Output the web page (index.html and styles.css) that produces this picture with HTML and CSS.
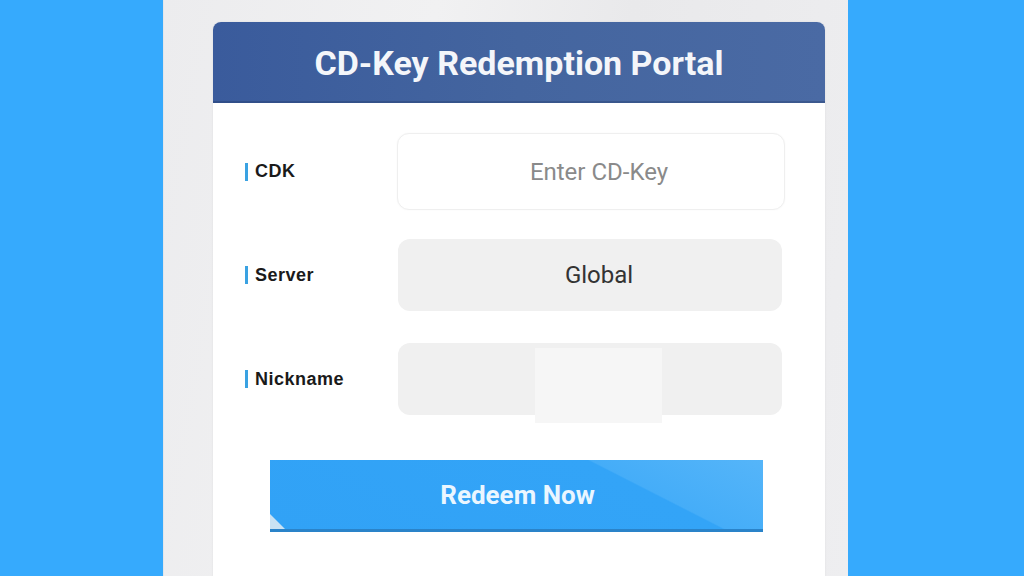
FILE: index.html
```html
<!DOCTYPE html>
<html>
<head>
<meta charset="utf-8">
<link rel="stylesheet" href="styles.css">
</head>
<body>
<div class="stage">
  <div class="panel">
    <div class="card">
      <div class="card-head">CD-Key Redemption Portal</div>
      <div class="card-body">
        <div class="row">
          <div class="label">CDK</div>
          <div class="field field-input">Enter CD-Key</div>
        </div>
        <div class="row row-server">
          <div class="label">Server</div>
          <div class="field field-gray field-value">Global</div>
        </div>
        <div class="row row-nick">
          <div class="label">Nickname</div>
          <div class="field field-gray field-nick"><span class="mask"></span></div>
        </div>
        <div class="btn-wrap">
          <div class="btn">Redeem Now</div>
        </div>
      </div>
    </div>
  </div>
</div>
</body>
</html>
```

FILE: styles.css
```css
html, body {
  margin: 0;
  padding: 0;
}
body {
  background: #36aafd;
  width: 1024px;
  height: 576px;
  overflow: hidden;
  font-family: Roboto, "Liberation Sans", Arial, sans-serif;
}
.stage {
  display: flex;
  padding-left: 163px;
  height: 576px;
}
.panel {
  width: 685px;
  height: 576px;
  box-sizing: border-box;
  padding: 22px 23px 0 50px;
  background: linear-gradient(100deg, #ececee 0%, #f1f1f2 35%, #e9e9eb 60%, #eeeef0 100%);
  box-shadow: inset 1px 0 0 #e2e6ea;
}
.card {
  width: 612px;
  height: 560px;
  background: #fff;
  border-radius: 8px 8px 0 0;
  box-shadow: 0 0 2px rgba(0,0,0,0.08);
}
.card-head {
  height: 81px;
  border-radius: 8px 8px 0 0;
  background: linear-gradient(90deg, #3a5b9c 0%, #44659f 50%, #4a6aa4 100%);
  color: #f4f6fa;
  font-weight: 700;
  font-size: 34px;
  display: flex;
  align-items: center;
  justify-content: center;
  box-shadow: inset 0 -2px 0 rgba(20,40,80,0.25);
}
.card-body {
  padding: 30px 40px 0 32px;
}
.row {
  display: flex;
  align-items: center;
}
.row-server {
  margin-top: 29px;
}
.row-nick {
  margin-top: 32px;
}
.label {
  width: 152px;
  font-family: "Liberation Sans", Arial, sans-serif;
  font-weight: 700;
  font-size: 18px;
  letter-spacing: 0.5px;
  color: #1a1a1a;
  display: flex;
  align-items: center;
  gap: 7px;
}
.label::before {
  content: "";
  width: 3px;
  height: 18px;
  background: #3aa2e2;
}
.field {
  box-sizing: border-box;
  border-radius: 12px;
  display: flex;
  align-items: center;
  justify-content: center;
  padding-left: 18px;
  font-size: 24px;
}
.field-input {
  width: 388px;
  height: 77px;
  background: #fff;
  border: 1.5px solid #efefef;
  color: #8a8a8a;
  box-shadow: 0 0 2px rgba(0,0,0,0.04);
  padding-left: 16px;
}
.field-gray {
  width: 384px;
  height: 72px;
  margin-left: 1px;
  background: #f0f0f0;
}
.field-value {
  color: #333;
}
.field-nick {
  position: relative;
}
.mask {
  position: absolute;
  left: 137px;
  top: 5px;
  width: 127px;
  height: 75px;
  background: #f6f6f6;
}
.btn-wrap {
  margin-top: 45px;
  padding-left: 25px;
}
.btn {
  position: relative;
  width: 493px;
  height: 72px;
  box-sizing: border-box;
  background: linear-gradient(27deg, #31a2f6 0%, #33a4f7 72%, #45adf8 72.5%, #55b5f9 100%);
  border-bottom: 3px solid #2a83c9;
  color: #eaf6ff;
  font-weight: 700;
  font-size: 26px;
  display: flex;
  align-items: center;
  justify-content: center;
  padding-left: 2px;
  overflow: hidden;
}
.btn::before {
  content: "";
  position: absolute;
  left: 0;
  bottom: -3px;
  width: 0;
  height: 0;
  border-left: 18px solid #c9e2f3;
  border-top: 18px solid transparent;
}
```
